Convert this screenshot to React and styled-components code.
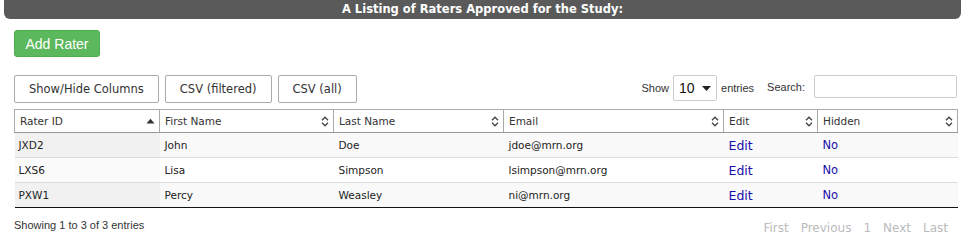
import React from 'react'
import styled, { createGlobalStyle } from 'styled-components'

const GlobalStyle = createGlobalStyle`
    body {
        margin: 0;
        background: white;
        font-family: "DejaVu Sans", Tahoma, sans-serif;
        color: #333;
    }
`

const columns = [
    { label: 'Rater ID', width: 145, sort: 'asc' },
    { label: 'First Name', width: 174 },
    { label: 'Last Name', width: 170 },
    { label: 'Email', width: 220 },
    { label: 'Edit', width: 94 },
    { label: 'Hidden', width: 140 },
]

const raters = [
    { id: 'JXD2', first: 'John', last: 'Doe', email: 'jdoe@mrn.org' },
    { id: 'LXS6', first: 'Lisa', last: 'Simpson', email: 'lsimpson@mrn.org' },
    { id: 'PXW1', first: 'Percy', last: 'Weasley', email: 'ni@mrn.org' },
]

const SortIcon = ({ dir }) => (
    dir === 'asc' ? (
        <svg width="9" height="6" viewBox="0 0 9 6">
            <path d="M0.5 5.5 L4.5 0.8 L8.5 5.5 Z" fill="#333" />
        </svg>
    ) : (
        <svg width="8" height="11" viewBox="0 0 8 11">
            <path d="M1 4.2 L4 1.2 L7 4.2 M1 6.8 L4 9.8 L7 6.8" fill="none" stroke="#444" strokeWidth="1.3" />
        </svg>
    )
)

export default function App() {
    return (
        <>
            <GlobalStyle />
            <TitleBar>A Listing of Raters Approved for the Study:</TitleBar>
            <Content>
                <AddButton>Add Rater</AddButton>
                <Toolbar>
                    <ToolButton>Show/Hide Columns</ToolButton>
                    <ToolButton>CSV (filtered)</ToolButton>
                    <ToolButton>CSV (all)</ToolButton>
                    <Controls>
                        <Label>Show</Label>
                        <Select>
                            10
                            <svg width="9" height="5" viewBox="0 0 9 5">
                                <path d="M0 0 L9 0 L4.5 5 Z" fill="#222" />
                            </svg>
                        </Select>
                        <Label>entries</Label>
                        <Label search>Search:</Label>
                        <SearchBox />
                    </Controls>
                </Toolbar>
                <Table>
                    <thead>
                        <tr>
                            {columns.map(c => (
                                <Th key={c.label} style={{ width: c.width }}>
                                    <HeadInner>
                                        {c.label}
                                        <SortIcon dir={c.sort} />
                                    </HeadInner>
                                </Th>
                            ))}
                        </tr>
                    </thead>
                    <tbody>
                        {raters.map((r, i) => (
                            <Row key={r.id} odd={i % 2 === 0}>
                                <Td sorted odd={i % 2 === 0}>{r.id}</Td>
                                <Td>{r.first}</Td>
                                <Td>{r.last}</Td>
                                <Td>{r.email}</Td>
                                <Td><Link big>Edit</Link></Td>
                                <Td><Link>No</Link></Td>
                            </Row>
                        ))}
                    </tbody>
                </Table>
                <Footer>
                    <Info>Showing 1 to 3 of 3 entries</Info>
                    <Pager>
                        <span>First</span>
                        <span>Previous</span>
                        <span>1</span>
                        <span>Next</span>
                        <span>Last</span>
                    </Pager>
                </Footer>
            </Content>
        </>
    )
}

const TitleBar = styled.div`
    margin: 0 13px 0 4px;
    height: 19px;
    background: #5a5a5a;
    border-radius: 0 0 6px 6px;
    color: white;
    font-weight: bold;
    font-size: 11.5px;
    line-height: 19px;
    text-align: center;
`

const Content = styled.div`
    padding: 11px 0 0 14px;
    width: 943px;
`

const AddButton = styled.button`
    width: 86px;
    height: 27px;
    background: #5cb85c;
    border: 1px solid #4cae4c;
    border-radius: 3px;
    color: white;
    font-family: "Liberation Sans", Arial, sans-serif;
    font-size: 14px;
    padding: 0;
`

const Toolbar = styled.div`
    display: flex;
    align-items: flex-start;
    gap: 6px;
    margin-top: 18px;
    height: 34px;
`

const ToolButton = styled.button`
    height: 28px;
    padding: 0 14px;
    background: white;
    border: 1px solid #aaa;
    border-radius: 2px;
    color: #333;
    font-family: "DejaVu Sans", Tahoma, sans-serif;
    font-size: 11.5px;
`

const Controls = styled.div`
    margin-left: auto;
    display: flex;
    align-items: center;
    height: 26px;
    font-family: "Liberation Sans", Arial, sans-serif;
    font-size: 11px;
`

const Label = styled.span`
    margin: ${props => props.search ? '-3px 9px 0 9px' : '0 4px'};
    color: #333;
`

const Select = styled.div`
    display: flex;
    align-items: center;
    justify-content: space-between;
    box-sizing: border-box;
    width: 44px;
    height: 26px;
    padding: 0 5px 0 5px;
    border: 1px solid #ccc;
    border-radius: 2px;
    font-size: 14px;
    color: #111;
`

const SearchBox = styled.div`
    box-sizing: border-box;
    width: 143px;
    height: 23px;
    margin-top: -4px;
    border: 1px solid #ccc;
    border-radius: 2px;
`

const Table = styled.table`
    width: 943px;
    border-collapse: collapse;
    table-layout: fixed;
    font-size: 10.5px;
`

const Th = styled.th`
    height: 23px;
    padding: 0 4px 0 5px;
    border: 1px solid #aaa;
    border-bottom: 1px solid #999;
    text-align: left;
    font-weight: normal;
    color: #333;
    font-size: 10.5px;
    box-sizing: border-box;
`

const HeadInner = styled.div`
    display: flex;
    align-items: center;
    justify-content: space-between;
`

const Row = styled.tr`
    background: ${props => props.odd ? '#f9f9f9' : 'white'};
    border-top: 1px solid #ddd;
    &:first-child { border-top: none; }
    &:last-child { border-bottom: 1px solid #111; }
`

const Td = styled.td`
    height: 24px;
    padding: 0 5px;
    color: #222;
    background: ${props => props.sorted ? (props.odd ? '#f1f1f1' : '#fafafa') : 'transparent'};
    &:first-child { padding-left: 4px; }
`

const Link = styled.span`
    color: #1a0dab;
    font-size: ${props => props.big ? '12.5px' : '11.5px'};
`

const Footer = styled.div`
    display: flex;
    justify-content: space-between;
    align-items: center;
    margin-top: 7px;
    padding-right: 9px;
`

const Info = styled.div`
    font-family: "Liberation Sans", Arial, sans-serif;
    font-size: 11px;
    color: #333;
`

const Pager = styled.div`
    display: flex;
    gap: 12px;
    margin-top: 6px;
    color: #bbb;
    font-size: 12px;
`
